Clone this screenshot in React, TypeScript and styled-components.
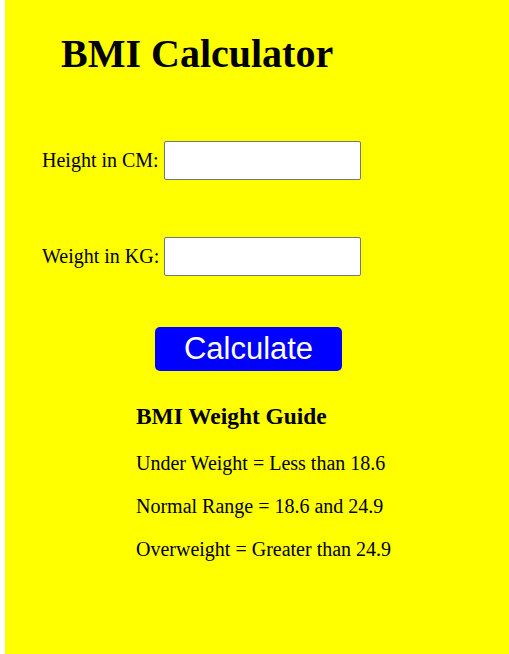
import React from "react";
import styled, { createGlobalStyle } from "styled-components";

const GlobalStyle = createGlobalStyle`
  body {
    margin: 0;
    background: #ffffff;
    font-family: "Liberation Serif", "Times New Roman", serif;
  }
`;

export default function App() {
  return (
    <>
      <GlobalStyle />
      <Page>
        <Title>BMI Calculator</Title>
        <Form>
          <Row>
            <Label htmlFor="height">Height in CM:</Label>
            <Input id="height" type="text" />
          </Row>
          <Row>
            <Label htmlFor="weight">Weight in KG:</Label>
            <Input id="weight" type="text" />
          </Row>
        </Form>
        <CalcButton type="button">Calculate</CalcButton>
        <Guide>
          <GuideTitle>BMI Weight Guide</GuideTitle>
          <GuideLine>Under Weight = Less than 18.6</GuideLine>
          <GuideLine>Normal Range = 18.6 and 24.9</GuideLine>
          <GuideLine>Overweight = Greater than 24.9</GuideLine>
        </Guide>
      </Page>
    </>
  );
}

const Page = styled.div`
  margin-left: 5px;
  min-height: 654px;
  box-sizing: border-box;
  padding-top: 31px;
  background-color: #ffff00;
  display: flex;
  flex-direction: column;
  font-size: 20px;
  color: #000000;
`;

const Title = styled.h1`
  margin: 0 0 0 56px;
  font-size: 40px;
  font-weight: 700;
  line-height: 46px;
`;

const Form = styled.div`
  display: flex;
  flex-direction: column;
  gap: 57px;
  margin-top: 64px;
  padding-left: 37px;
`;

const Row = styled.div`
  display: flex;
  align-items: center;
  gap: 5px;
`;

const Label = styled.label`
  font-size: 20px;
  line-height: 23px;
`;

const Input = styled.input`
  width: 197px;
  height: 39px;
  box-sizing: border-box;
  border: 1px solid #767676;
  border-radius: 2px;
  background: #ffffff;
  padding: 0 4px;
  font-size: 16px;
`;

const CalcButton = styled.button`
  align-self: flex-start;
  margin: 51px 0 0 150px;
  width: 187px;
  height: 44px;
  border: none;
  border-radius: 5px;
  background-color: #0000ff;
  color: #ffffff;
  font-family: "Liberation Sans", Arial, sans-serif;
  font-size: 31px;
  line-height: 44px;
  padding: 0;
  cursor: pointer;
`;

const Guide = styled.div`
  margin-top: 32px;
  padding-left: 131px;
  display: flex;
  flex-direction: column;
  gap: 20px;
`;

const GuideTitle = styled.h3`
  margin: 0 0 2px;
  font-size: 23.4px;
  font-weight: 700;
  line-height: 27px;
`;

const GuideLine = styled.p`
  margin: 0;
  font-size: 20px;
  line-height: 23px;
`;
